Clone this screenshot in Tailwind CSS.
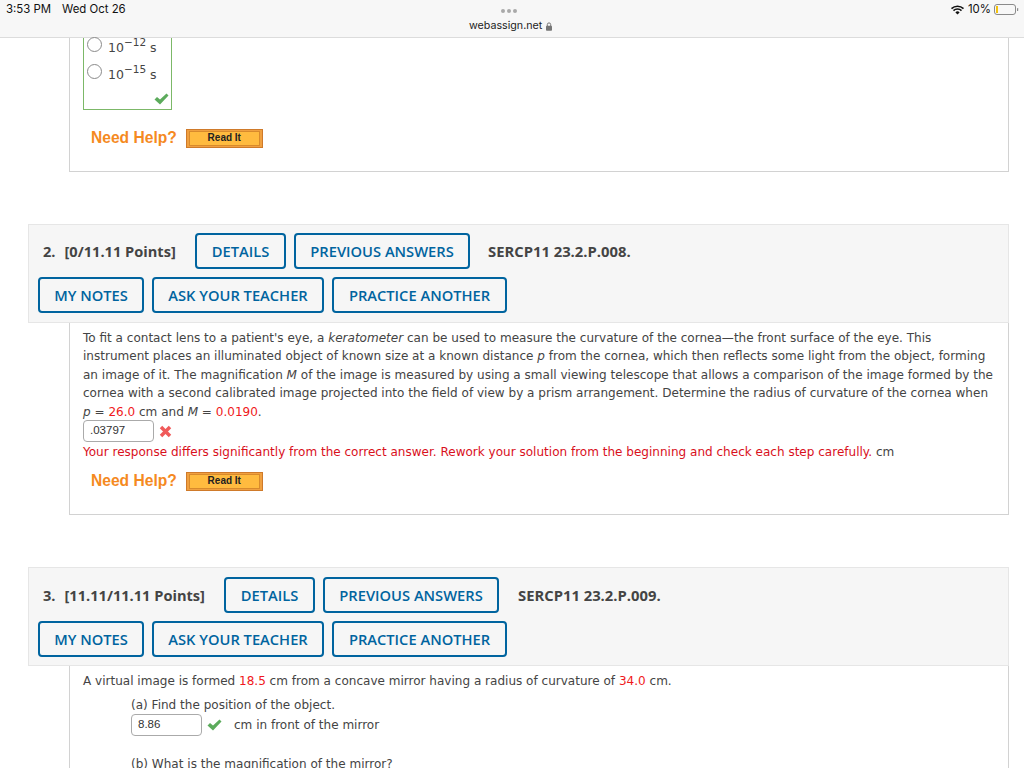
<!DOCTYPE html>
<html>
<head>
<meta charset="utf-8">
<script src="https://cdn.jsdelivr.net/npm/@tailwindcss/browser@4"></script>
</head>
<body class="bg-white">
<div class="w-[1024px] h-[768px] overflow-hidden bg-white flex flex-col font-['DejaVu_Sans',sans-serif] text-[12.04px] leading-[18.4px] text-[#444]">

  <!-- browser bar -->
  <header class="h-[38px] shrink-0 bg-[#f7f7f7] border-b border-[#dcdcdc] relative font-['Inter',sans-serif] text-[#111]">
    <div class="flex items-center justify-between pl-[6px] pr-[4px] h-[19px] text-[11.4px]">
      <div class="flex gap-[11px]"><span>3:53 PM</span><span>Wed Oct 26</span></div>
      <div class="flex items-center gap-[3px]">
        <svg width="15" height="10" viewBox="0 0 14 10"><path d="M7 9.6 4.9 7.4a3 3 0 0 1 4.2 0z" fill="#111"/><path d="M1 3.6a8.6 8.6 0 0 1 12 0M3 5.6a5.7 5.7 0 0 1 8 0" fill="none" stroke="#111" stroke-width="1.5"/></svg>
        <span>10%</span>
        <svg width="26" height="11" viewBox="0 0 26 11"><rect x=".5" y=".5" width="21" height="10" rx="2.5" fill="none" stroke="#8a8a8a"/><rect x="2" y="2" width="2" height="7" fill="#f4c20d"/><rect x="23" y="4" width="1.2" height="3" rx=".6" fill="#8a8a8a"/></svg>
      </div>
    </div>
    <div class="flex gap-[2px] absolute top-[9px] left-[501px]">
      <span class="w-[4px] h-[4px] rounded-full bg-[#a9a9a9]"></span><span class="w-[4px] h-[4px] rounded-full bg-[#a9a9a9]"></span><span class="w-[4px] h-[4px] rounded-full bg-[#a9a9a9]"></span>
    </div>
    <div class="flex items-center gap-[4px] text-[10.7px] leading-[14px] text-[#222] absolute top-[19px] left-[469px]">
      <span>webassign.net</span>
      <svg width="6" height="9" viewBox="0 0 6 9"><path d="M1.3 4V2.6a1.7 1.7 0 0 1 3.4 0V4" fill="none" stroke="#777"/><rect y="3.7" width="6" height="5" rx=".8" fill="#777"/></svg>
    </div>
  </header>

  <!-- question 1 tail -->
  <section class="ml-[69px] w-[940px] h-[134px] shrink-0 border-x border-b border-[#d2d2d2]">
    <div class="ml-[13px] w-[89px] h-[72px] border-x border-b border-x-[#7cb868] border-b-[#7cb868] relative">
      <div class="flex items-center h-[12px] pl-[3px] gap-[6px]">
        <span class="w-[15px] h-[15px] rounded-full border-[1.5px] border-[#8a8a8a] bg-white shrink-0"></span>
        <span class="text-[12.5px] mt-[8px]">10<sup class="text-[10.5px] top-[-6px]">−12</sup> s</span>
      </div>
      <div class="flex items-center h-[24px] pl-[3px] gap-[6px] mt-[9px]">
        <span class="w-[15px] h-[15px] rounded-full border-[1.5px] border-[#8a8a8a] bg-white shrink-0"></span>
        <span class="text-[12.5px] mt-[8px]">10<sup class="text-[10.5px] top-[-6px]">−15</sup> s</span>
      </div>
      <svg class="absolute right-[2px] top-[55px]" width="15" height="12" viewBox="0 0 15 12"><path d="M.5 6.5 3 4 6 6.5 12.5.5 14.5 2.5 6 11.5z" fill="#5cab5c"/></svg>
    </div>
    <div class="flex items-center ml-[21px] mt-[18px] gap-[9px]">
      <span class="font-['Liberation_Sans',sans-serif] font-bold text-[#f58a1f] text-[15.6px] leading-[20px]">Need Help?</span>
      <span class="w-[77px] h-[19px] bg-[#f0a040] border border-[#cf7a2a] px-[2px] py-[1px] flex"><span class="grow bg-[#ffbb3f] border border-[#d88a2c] flex items-center justify-center font-['Liberation_Sans',sans-serif] font-bold text-[10px] text-[#222]">Read It</span></span>
    </div>
  </section>

  <!-- question 2 -->
  <section class="mt-[52px] shrink-0">
    <div class="ml-[28px] w-[981px] h-[99px] bg-[#f6f6f6] border border-[#e6e6e6] font-['Open_Sans',sans-serif] font-semibold text-[14.7px] pt-[8px] pl-[9px] flex flex-col gap-[8px]">
      <div class="flex items-center h-[36px]">
        <span class="ml-[5px] w-[152px] flex gap-[9px] font-bold text-[#444] text-[14.6px]"><span>2.</span><span>[0/11.11 Points]</span></span>
        <span class="h-[36px] w-[91px] flex items-center justify-center border-2 border-[#00649f] rounded-[4px] text-[#00649f]">DETAILS</span>
        <span class="h-[36px] w-[176px] ml-[8px] flex items-center justify-center border-2 border-[#00649f] rounded-[4px] text-[#00649f]">PREVIOUS ANSWERS</span>
        <span class="ml-[18px] font-bold text-[#444] text-[14.8px]">SERCP11 23.2.P.008.</span>
      </div>
      <div class="flex items-center gap-[8px] h-[36px]">
        <span class="h-[36px] w-[106px] flex items-center justify-center border-2 border-[#00649f] rounded-[4px] text-[#00649f]">MY NOTES</span>
        <span class="h-[36px] w-[172px] flex items-center justify-center border-2 border-[#00649f] rounded-[4px] text-[#00649f]">ASK YOUR TEACHER</span>
        <span class="h-[36px] w-[175px] flex items-center justify-center border-2 border-[#00649f] rounded-[4px] text-[#00649f]">PRACTICE ANOTHER</span>
      </div>
    </div>
    <div class="ml-[69px] w-[940px] h-[192px] border-x border-b border-[#d2d2d2] pl-[13px] pt-[6px] whitespace-nowrap">
      <p>To fit a contact lens to a patient's eye, a <i>keratometer</i> can be used to measure the curvature of the cornea—the front surface of the eye. This<br>
      instrument places an illuminated object of known size at a known distance <i>p</i> from the cornea, which then reflects some light from the object, forming<br>
      an image of it. The magnification <i>M</i> of the image is measured by using a small viewing telescope that allows a comparison of the image formed by the<br>
      cornea with a second calibrated image projected into the field of view by a prism arrangement. Determine the radius of curvature of the cornea when<br>
      <i>p</i> = <span class="text-[#f01820]">26.0</span> cm and <i>M</i> = <span class="text-[#f01820]">0.0190</span>.</p>
      <div class="flex items-center gap-[5px] h-[22px] -mt-[1px]">
        <span class="w-[71px] h-[22px] border border-[#aaa] rounded-[4px] pl-[6px] font-['Liberation_Sans',sans-serif] text-[11.5px] leading-[18px] text-[#333]">.03797</span>
        <svg width="13" height="13" viewBox="0 0 13 13"><path d="M2 2 11 11M11 2 2 11" stroke="#f05a5a" stroke-width="3.5"/></svg>
      </div>
      <p class="mt-[1px]"><span class="text-[#d9101c]">Your response differs significantly from the correct answer. Rework your solution from the beginning and check each step carefully.</span> cm</p>
      <div class="flex items-center ml-[8px] mt-[10px] gap-[9px]">
        <span class="font-['Liberation_Sans',sans-serif] font-bold text-[#f58a1f] text-[15.6px] leading-[20px]">Need Help?</span>
        <span class="w-[77px] h-[19px] bg-[#f0a040] border border-[#cf7a2a] px-[2px] py-[1px] flex"><span class="grow bg-[#ffbb3f] border border-[#d88a2c] flex items-center justify-center font-['Liberation_Sans',sans-serif] font-bold text-[10px] text-[#222]">Read It</span></span>
      </div>
    </div>
  </section>

  <!-- question 3 -->
  <section class="mt-[52px] shrink-0">
    <div class="ml-[28px] w-[981px] h-[99px] bg-[#f6f6f6] border border-[#e6e6e6] font-['Open_Sans',sans-serif] font-semibold text-[14.7px] pt-[9px] pl-[9px] flex flex-col gap-[8px]">
      <div class="flex items-center h-[36px]">
        <span class="ml-[5px] w-[181px] flex gap-[9px] font-bold text-[#444] text-[14.6px]"><span>3.</span><span>[11.11/11.11 Points]</span></span>
        <span class="h-[36px] w-[91px] flex items-center justify-center border-2 border-[#00649f] rounded-[4px] text-[#00649f]">DETAILS</span>
        <span class="h-[36px] w-[176px] ml-[8px] flex items-center justify-center border-2 border-[#00649f] rounded-[4px] text-[#00649f]">PREVIOUS ANSWERS</span>
        <span class="ml-[19px] font-bold text-[#444] text-[14.8px]">SERCP11 23.2.P.009.</span>
      </div>
      <div class="flex items-center gap-[8px] h-[36px]">
        <span class="h-[36px] w-[106px] flex items-center justify-center border-2 border-[#00649f] rounded-[4px] text-[#00649f]">MY NOTES</span>
        <span class="h-[36px] w-[172px] flex items-center justify-center border-2 border-[#00649f] rounded-[4px] text-[#00649f]">ASK YOUR TEACHER</span>
        <span class="h-[36px] w-[175px] flex items-center justify-center border-2 border-[#00649f] rounded-[4px] text-[#00649f]">PRACTICE ANOTHER</span>
      </div>
    </div>
    <div class="ml-[69px] w-[940px] border-x border-[#d2d2d2] pl-[13px] pt-[6px] whitespace-nowrap h-[120px]">
      <p>A virtual image is formed <span class="text-[#f01820]">18.5</span> cm from a concave mirror having a radius of curvature of <span class="text-[#f01820]">34.0</span> cm.</p>
      <div class="ml-[48px] mt-[6px]">
        <p>(a) Find the position of the object.</p>
        <div class="flex items-center h-[22px] -mt-[1px]">
          <span class="w-[71px] h-[22px] border border-[#aaa] rounded-[4px] pl-[6px] font-['Liberation_Sans',sans-serif] text-[11.5px] leading-[18px] text-[#333]">8.86</span>
          <svg class="ml-[5px]" width="15" height="12" viewBox="0 0 15 12"><path d="M.5 6.5 3 4 6 6.5 12.5.5 14.5 2.5 6 11.5z" fill="#5cab5c"/></svg>
          <span class="ml-[12px]">cm in front of the mirror</span>
        </div>
        <p class="mt-[19px]">(b) What is the magnification of the mirror?</p>
      </div>
    </div>
  </section>
</div>
</body>
</html>
